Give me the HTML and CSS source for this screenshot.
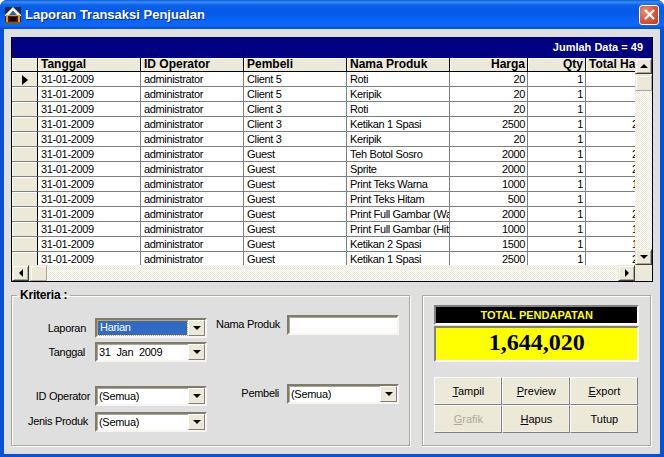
FILE: index.html
```html
<!DOCTYPE html>
<html lang="id">
<head>
<meta charset="utf-8">
<title>Laporan Transaksi Penjualan</title>
<link rel="stylesheet" href="styles.css">
</head>
<body>
<div class="window">
  <header class="titlebar">
    <svg class="app-icon" width="16" height="17" viewBox="0 0 16 17">
      <rect width="16" height="17" fill="#1c2a50"/>
      <path d="M0 8 8 0l8 8v1H0z" fill="#f4f2e6"/>
      <path d="M4 8 8 3.500 12 8z" fill="#2f5fb0"/>
      <rect x="1" y="8" width="14" height="8" fill="#d8a020"/>
      <rect x="3" y="9" width="10" height="7" fill="#6a1408"/>
      <rect x="4.500" y="10" width="7" height="4" fill="#0c0604"/>
      <rect x="0" y="15" width="16" height="2" fill="#7a5c18"/>
    </svg>
    <span class="title">Laporan Transaksi Penjualan</span>
    <button class="close" type="button" aria-label="Tutup">
      <svg width="13" height="13" viewBox="0 0 13 13"><path d="M2 2l9 9M11 2l-9 9" stroke="#fff" stroke-width="2.400" fill="none"/></svg>
    </button>
  </header>
  <main class="client">
    <section class="datagrid">
      <div class="banner">Jumlah Data = 49</div>
      <div class="grid-body">
        <div class="viewport">
          <table class="rows">
            <colgroup><col class="c-ind"><col class="c-w"><col class="c-w"><col class="c-w"><col class="c-w"><col class="c-harga"><col class="c-qty"><col class="c-total"></colgroup>
            <thead>
              <tr><th></th><th>Tanggal</th><th>ID Operator</th><th>Pembeli</th><th>Nama Produk</th><th class="num">Harga</th><th class="num">Qty</th><th class="num">Total Harga</th></tr>
            </thead>
            <tbody>
              <tr><th class="ind"><span class="arrow"></span></th><td>31-01-2009</td><td>administrator</td><td>Client 5</td><td>Roti</td><td class="num">20</td><td class="num">1</td><td class="num">20</td></tr>
              <tr><th class="ind"></th><td>31-01-2009</td><td>administrator</td><td>Client 5</td><td>Keripik</td><td class="num">20</td><td class="num">1</td><td class="num">20</td></tr>
              <tr><th class="ind"></th><td>31-01-2009</td><td>administrator</td><td>Client 3</td><td>Roti</td><td class="num">20</td><td class="num">1</td><td class="num">20</td></tr>
              <tr><th class="ind"></th><td>31-01-2009</td><td>administrator</td><td>Client 3</td><td>Ketikan 1 Spasi</td><td class="num">2500</td><td class="num">1</td><td class="num">2500</td></tr>
              <tr><th class="ind"></th><td>31-01-2009</td><td>administrator</td><td>Client 3</td><td>Keripik</td><td class="num">20</td><td class="num">1</td><td class="num">20</td></tr>
              <tr><th class="ind"></th><td>31-01-2009</td><td>administrator</td><td>Guest</td><td>Teh Botol Sosro</td><td class="num">2000</td><td class="num">1</td><td class="num">2000</td></tr>
              <tr><th class="ind"></th><td>31-01-2009</td><td>administrator</td><td>Guest</td><td>Sprite</td><td class="num">2000</td><td class="num">1</td><td class="num">2000</td></tr>
              <tr><th class="ind"></th><td>31-01-2009</td><td>administrator</td><td>Guest</td><td>Print Teks Warna</td><td class="num">1000</td><td class="num">1</td><td class="num">1000</td></tr>
              <tr><th class="ind"></th><td>31-01-2009</td><td>administrator</td><td>Guest</td><td>Print Teks Hitam</td><td class="num">500</td><td class="num">1</td><td class="num">500</td></tr>
              <tr><th class="ind"></th><td>31-01-2009</td><td>administrator</td><td>Guest</td><td>Print Full Gambar (Warna)</td><td class="num">2000</td><td class="num">1</td><td class="num">2000</td></tr>
              <tr><th class="ind"></th><td>31-01-2009</td><td>administrator</td><td>Guest</td><td>Print Full Gambar (Hitam)</td><td class="num">1000</td><td class="num">1</td><td class="num">1000</td></tr>
              <tr><th class="ind"></th><td>31-01-2009</td><td>administrator</td><td>Guest</td><td>Ketikan 2 Spasi</td><td class="num">1500</td><td class="num">1</td><td class="num">1500</td></tr>
              <tr><th class="ind"></th><td>31-01-2009</td><td>administrator</td><td>Guest</td><td>Ketikan 1 Spasi</td><td class="num">2500</td><td class="num">1</td><td class="num">2500</td></tr>
            </tbody>
          </table>
        </div>
        <div class="vscroll">
          <span class="sb-btn sb-btn-h"><i class="tri tri-up"></i></span>
          <span class="sb-btn thumb-v"></span>
          <span class="sb-track"></span>
          <span class="sb-btn sb-btn-h"><i class="tri tri-down"></i></span>
        </div>
        <div class="hscroll">
          <span class="sb-btn sb-btn-w"><i class="tri tri-left"></i></span>
          <span class="sb-btn thumb-h"></span>
          <span class="sb-track"></span>
          <span class="sb-btn sb-btn-w"><i class="tri tri-right"></i></span>
        </div>
        <div class="corner"></div>
      </div>
    </section>

    <div class="bottom">
      <fieldset class="criteria">
        <legend>Kriteria :</legend>
        <div class="form-left">
          <div class="row row-laporan"><label class="lbl lbl-laporan">Laporan</label>
            <div class="combo focused"><span class="combo-text"><span class="sel">Harian</span></span><span class="combo-btn"><i class="tri tri-down"></i></span></div></div>
          <div class="row row-tanggal"><label class="lbl lbl-tanggal">Tanggal</label>
            <div class="combo"><span class="combo-text">31 Jan 2009</span><span class="combo-btn"><i class="tri tri-down"></i></span></div></div>
          <div class="row row-operator"><label class="lbl lbl-operator">ID Operator</label>
            <div class="combo"><span class="combo-text">(Semua)</span><span class="combo-btn"><i class="tri tri-down"></i></span></div></div>
          <div class="row row-jenis"><label class="lbl lbl-jenis">Jenis Produk</label>
            <div class="combo"><span class="combo-text">(Semua)</span><span class="combo-btn"><i class="tri tri-down"></i></span></div></div>
        </div>
        <div class="form-right">
          <div class="row row-nama"><label class="lbl">Nama Produk</label><div class="textbox"></div></div>
          <div class="row row-pembeli"><label class="lbl lbl-pembeli">Pembeli</label>
            <div class="combo"><span class="combo-text">(Semua)</span><span class="combo-btn"><i class="tri tri-down"></i></span></div></div>
        </div>
      </fieldset>

      <aside class="summary">
        <div class="total-head">TOTAL PENDAPATAN</div>
        <div class="total-value">1,644,020</div>
        <div class="actions">
          <button type="button" class="act"><u>T</u>ampil</button>
          <button type="button" class="act"><u>P</u>review</button>
          <button type="button" class="act"><u>E</u>xport</button>
          <button type="button" class="act disabled"><u>G</u>rafik</button>
          <button type="button" class="act"><u>H</u>apus</button>
          <button type="button" class="act">Tutup</button>
        </div>
      </aside>
    </div>
  </main>
</div>
</body>
</html>
```
FILE: styles.css
```css
* { box-sizing: border-box; }
html, body { margin: 0; padding: 0; background: #fff; }
body { width: 664px; height: 457px; overflow: hidden; font-family: "Liberation Sans", Arial, sans-serif; font-size: 11px; color: #000; }

.window { width: 664px; height: 457px; display: flex; flex-direction: column; background: #0a4fd8; border-radius: 7px 7px 0 0; overflow: hidden; }

.titlebar { height: 29px; flex: none; display: flex; align-items: center; padding: 0 5px;
  background: linear-gradient(180deg, #0a5ad6 0, #3a8cf5 2px, #0d62ea 5px, #0358e8 12px, #0a66fa 22px, #0d68f8 25px, #0350d8 29px); }
.app-icon { flex: none; margin-top: 1px; }
.title { margin-left: 4px; color: #fff; font-size: 13px; font-weight: bold; text-shadow: 1px 1px 0 #0a2a90; }
.close { margin-left: auto; width: 20px; height: 20px; padding: 0; border: 1px solid #fff; border-radius: 3px; display: flex; align-items: center; justify-content: center;
  background: radial-gradient(circle at 30% 30%, #ea8a70, #d8512e 60%, #c23a1c); }

.client { flex: 1; margin: 0 4px 3px; background: #dfdfdf; padding: 8px 7px 0; display: flex; flex-direction: column; }

.datagrid { height: 245px; flex: none; border: 1px solid #000; border-top: 0; display: flex; flex-direction: column; }
.banner { height: 21px; flex: none; background: #000080; color: #fff; font-weight: bold; font-size: 11px; text-align: right; line-height: 21px; padding-right: 9px; }
.grid-body { flex: 1; min-height: 0; display: grid; grid-template-columns: 623px 17px; grid-template-rows: 207px 16px; background: #ece9d8; }

.viewport { overflow: hidden; background: #fff; }
.rows { border-collapse: separate; border-spacing: 0; table-layout: fixed; width: 676px; }
.c-ind { width: 26px; } .c-w { width: 103px; } .c-harga { width: 78px; } .c-qty { width: 58px; } .c-total { width: 102px; }
.rows thead th { height: 14px; padding: 0 2px 0 3px; background: #ece9d8; font-size: 12px; font-weight: bold; text-align: left; line-height: 13px; white-space: nowrap; overflow: hidden;
  border-right: 1px solid #000; border-bottom: 1px solid #000; box-shadow: inset 1px 1px 0 #fff; }
.rows thead th.num { text-align: right; }
.rows thead th:last-child { text-align: left; border-right: 0; }
.rows td { height: 15px; padding: 0 2px 0 3px; line-height: 14px; white-space: nowrap; overflow: hidden; border-right: 1px solid #808080; border-bottom: 1px solid #808080; background: #fff; letter-spacing: -0.35px; }
.rows td.num { text-align: right; }
.rows td:last-child { border-right: 0; padding-right: 33px; }
.rows .ind { height: 15px; padding: 0; background: #ece9d8; border-right: 1px solid #000; border-bottom: 1px solid #808080; box-shadow: inset 1px 1px 0 #fff; vertical-align: middle; text-align: center; }
.arrow { display: inline-block; width: 0; height: 0; border-left: 6px solid #000; border-top: 5px solid transparent; border-bottom: 5px solid transparent; vertical-align: middle; }

.vscroll { display: flex; flex-direction: column; }
.hscroll { display: flex; }
.corner { background: #ece9d8; }
.sb-track { flex: 1; background-color: #ece9d8; background-image: conic-gradient(#fff 25%, #ece9d8 0 50%, #fff 0 75%, #ece9d8 0); background-size: 2px 2px; }
.sb-btn { flex: none; display: flex; align-items: center; justify-content: center; background: #ece9d8; border: 1px solid; border-color: #ece9d8 #404040 #404040 #ece9d8; box-shadow: inset 1px 1px 0 #fff, inset -1px -1px 0 #aca899; }
.sb-btn-h { height: 16px; width: 17px; }
.thumb-v { height: 16px; width: 17px; margin-top: 1px; border-color: #ece9d8 #aca899 #aca899 #ece9d8; box-shadow: inset 1px 1px 0 #fff; }
.sb-btn-w { width: 17px; height: 16px; }
.thumb-h { width: 17px; height: 16px; margin-left: 1px; border-color: #ece9d8 #aca899 #aca899 #ece9d8; box-shadow: inset 1px 1px 0 #fff; }

.tri { display: block; width: 0; height: 0; }
.tri-up { border-left: 4px solid transparent; border-right: 4px solid transparent; border-bottom: 4px solid #000; }
.tri-down { border-left: 4px solid transparent; border-right: 4px solid transparent; border-top: 4px solid #000; }
.tri-left { border-top: 4px solid transparent; border-bottom: 4px solid transparent; border-right: 4px solid #000; }
.tri-right { border-top: 4px solid transparent; border-bottom: 4px solid transparent; border-left: 4px solid #000; }

.bottom { display: flex; gap: 12px; margin-top: 13px; height: 151px; width: 640px; }

.criteria { width: 400px; height: 158px; margin: -7px 0 0; padding: 0; display: flex; min-inline-size: 0; border: 1px solid #aca899; box-shadow: inset 1px 1px 0 #fff, 1px 1px 0 #fff; }
.criteria legend { margin-left: 5px; padding: 0 3px; font-size: 12px; font-weight: bold; line-height: 14px; letter-spacing: -0.2px; }

.form-left { width: 200px; flex: none; padding-top: 16px; }
.form-right { flex: 1; padding-top: 13px; }
.row { display: flex; align-items: center; }
.lbl { display: block; text-align: right; font-size: 11px; letter-spacing: -0.3px; white-space: nowrap; }
.form-left .lbl { width: 74px; margin-right: 9px; }
.form-left .lbl-tanggal { width: 73px; margin-right: 10px; }
.form-left .lbl-operator { width: 78px; margin-right: 5px; }
.form-left .lbl-jenis { width: 76px; margin-right: 7px; margin-top: -2px; }
.row-tanggal { margin-top: 4px; }
.row-operator { margin-top: 24px; }
.row-jenis { margin-top: 6px; }
.form-right .lbl { width: 63px; margin: 0 8px 0 4px; }
.form-right .row-nama .lbl { margin-top: -2px; }
.form-right .lbl-pembeli { width: 63px; margin: -3px 8px 0 4px; }
.row-pembeli { margin-top: 49px; }

.combo { width: 112px; height: 20px; display: flex; border: 2px solid; border-color: #807c6c #f8f6ee #f8f6ee #807c6c; background: #fff; box-shadow: inset 1px 1px 0 #aca899; }
.combo-text { flex: 1; min-width: 0; padding: 1px 1px 0 2px; line-height: 15px; font-size: 11px; letter-spacing: -0.3px; word-spacing: 3px; }
.focused .combo-text { padding: 1px; }
.sel { display: block; height: 14px; line-height: 13px; padding-left: 2px; background: #316ac5; color: #fff; outline: 1px dotted #e0a030; }
.combo-btn { flex: none; width: 17px; display: flex; align-items: center; justify-content: center; background: #ece9d8; border: 1px solid; border-color: #fff #808080 #808080 #fff; }
.textbox { width: 112px; height: 20px; background: #fff; border: 2px solid; border-color: #807c6c #f8f6ee #f8f6ee #807c6c; box-shadow: inset 1px 1px 0 #aca899; }

.summary { width: 229px; border: 1px solid #aca899; box-shadow: inset 1px 1px 0 #fff, 1px 1px 0 #fff; padding: 9px 11px 0; }
.total-head { height: 20px; background: #000; color: #ffff00; font-weight: bold; font-size: 11px; text-align: center; line-height: 17px; border: 2px solid; border-color: #808080 #fff #fff #808080; }
.total-value { height: 36px; margin-top: 1px; background: #ffff00; font-family: "Liberation Serif", "Times New Roman", serif; font-weight: bold; font-size: 24px; line-height: 29px; text-align: center; border: 2px solid; border-color: #808080 #fff #fff #808080; }
.actions { margin-top: 15px; display: grid; grid-template-columns: repeat(3, 68px); grid-auto-rows: 28px; }
.act { padding: 0; font-family: inherit; font-size: 11px; color: #000; background: #ece9d8; border: 1px solid; border-color: #fff #808080 #808080 #fff; box-shadow: inset -1px -1px 0 #f4f2e6; }
.act.disabled { color: #aca899; }
```
